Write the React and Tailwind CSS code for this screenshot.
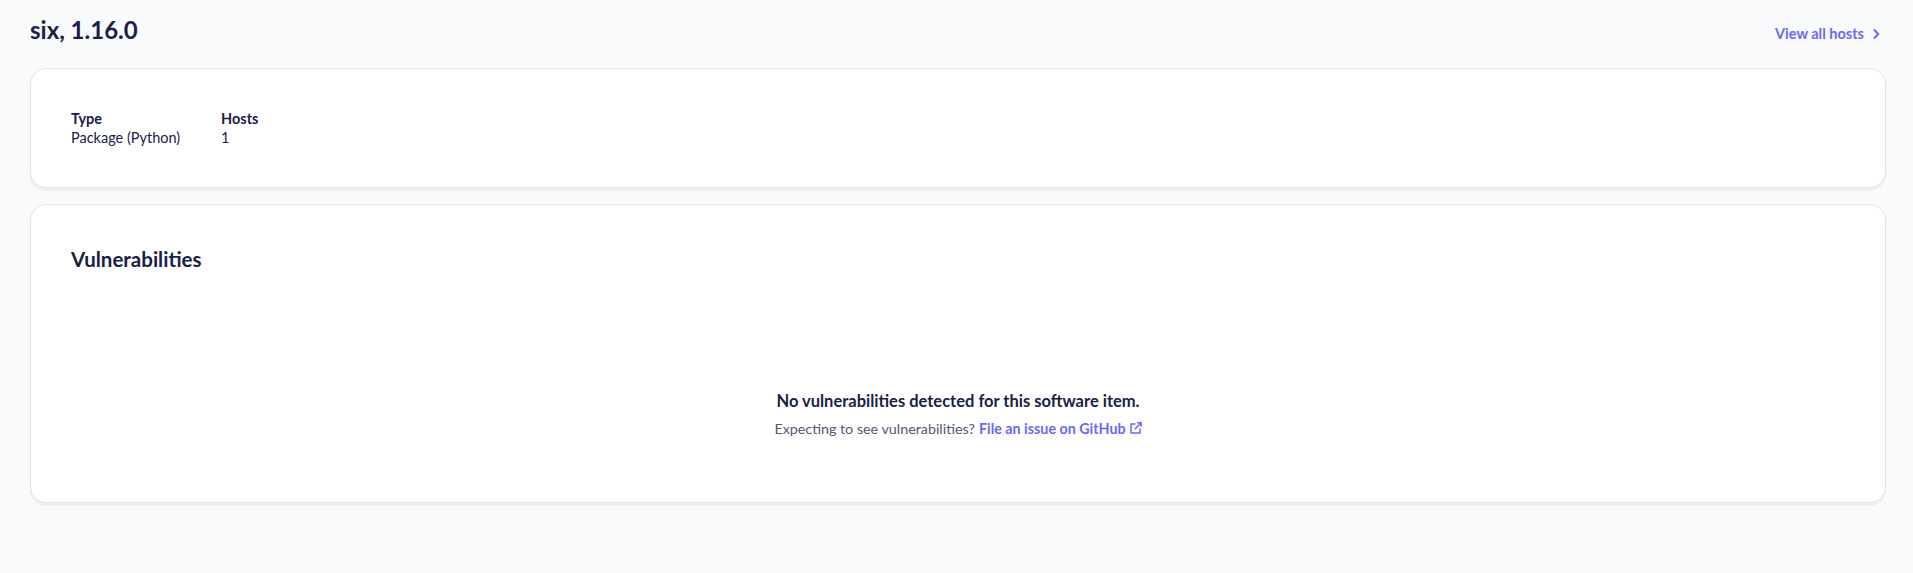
import React from "react";

const App = () => {
  return (
    <div className="min-h-[573px] bg-[#f9fafc] pl-[30px] pr-[27px] font-['Lato','Noto_Sans',sans-serif] text-[#192147]">
      <div className="flex h-[68px] items-start justify-between">
        <h1 className="mt-[12px] text-[24px] leading-[36px] font-bold">six, 1.16.0</h1>
        <a className="mt-[24px] mr-[6px] flex items-center gap-[8px] text-[14.5px] leading-[20px] font-bold text-[#6a67fe]">
          View all hosts
          <svg width="8" height="12" viewBox="0 0 8 12" fill="none">
            <path d="M2 1.5 6.2 6 2 10.5" stroke="#6a67fe" strokeWidth="2" />
          </svg>
        </a>
      </div>

      <div className="h-[120px] rounded-2xl border border-[#e2e4ea] bg-white px-[40px] pt-[40px] shadow-[0_3px_0_rgba(226,228,234,0.5)]">
        <div className="flex gap-[40px] text-[14.5px] leading-[19px]">
          <div className="w-[110px]">
            <div className="font-bold">Type</div>
            <div>Package (Python)</div>
          </div>
          <div>
            <div className="font-bold">Hosts</div>
            <div>1</div>
          </div>
        </div>
      </div>

      <div className="mt-[16px] h-[299px] rounded-2xl border border-[#e2e4ea] bg-white px-[40px] pt-[39px] shadow-[0_3px_0_rgba(226,228,234,0.5)]">
        <h2 className="text-[20.5px] leading-[30px] font-bold">Vulnerabilities</h2>
        <div className="mt-[115px] flex flex-col items-center gap-[6px] text-[14.3px] leading-[20px]">
          <p className="text-[16.5px] leading-[24px] font-bold">No vulnerabilities detected for this software item.</p>
          <p className="flex items-center text-[#515774]">
            Expecting to see vulnerabilities?
            <a className="ml-[4px] flex items-center gap-[4px] font-bold text-[#6a67fe]">
              File an issue on GitHub
              <svg className="mb-[2px]" width="12" height="12" viewBox="0 0 12 12" fill="none" stroke="#6a67fe" strokeWidth="1.5">
                <path d="M5.5 2H1v9h9V6.5" />
                <path d="M4.8 7.2 11 1M7.2 0.8h4v4" />
              </svg>
            </a>
          </p>
        </div>
      </div>
    </div>
  );
};

export default App;
